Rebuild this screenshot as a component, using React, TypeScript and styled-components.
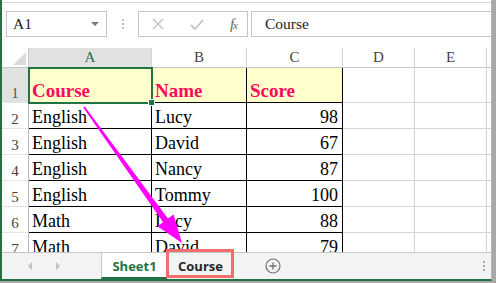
import React from 'react';
import styled, { createGlobalStyle } from 'styled-components';

const GlobalStyle = createGlobalStyle`
  html, body {
    margin: 0;
    padding: 0;
    background: #fff;
  }
  body {
    font-family: "Liberation Serif", "Times New Roman", serif;
  }
`;

const GREEN = '#217346';

const Frame = styled.div`
  position: relative;
  width: 496px;
  height: 283px;
  box-sizing: border-box;
  padding: 0 4px 2px 0;
  background: #a8a8a8;
  overflow: hidden;
`;

const Window = styled.div`
  height: 100%;
  box-sizing: border-box;
  display: flex;
  flex-direction: column;
  background: #fff;
  border-left: 2px solid ${GREEN};
  border-right: 1px solid #b4b4b4;
  border-bottom: 2px solid ${GREEN};
`;

const TopEdge = styled.div`
  height: 3px;
  box-sizing: border-box;
  border-bottom: 1px solid #d6d6d6;
  flex: none;
`;

// formula bar
const FormulaBar = styled.div`
  height: 45px;
  flex: none;
  box-sizing: border-box;
  padding: 8px 0 0 4px;
  display: flex;
  align-items: flex-start;
`;

const Box = styled.div`
  height: 26px;
  box-sizing: border-box;
  border: 1px solid #c6c6c6;
  display: flex;
  align-items: center;
  background: #fff;
`;

const NameBox = styled(Box)`
  width: 101px;
  padding: 0 6px;
  justify-content: space-between;
  font-size: 15.5px;
  color: #222;
`;

const DropArrow = styled.span`
  width: 0;
  height: 0;
  border-left: 4px solid transparent;
  border-right: 4px solid transparent;
  border-top: 4px solid #777;
  margin-right: 1px;
`;

const Grip = styled.div`
  width: 31px;
  height: 26px;
  display: flex;
  flex-direction: column;
  align-items: center;
  justify-content: center;
  gap: 2px;
  span {
    width: 2px;
    height: 2px;
    background: #bdbdbd;
  }
`;

const FxBox = styled(Box)`
  width: 110px;
  padding: 0 10px 0 13px;
  justify-content: space-between;
`;

const FxLabel = styled.span`
  font-style: italic;
  font-size: 15px;
  color: #666;
  letter-spacing: -1px;
  small {
    font-size: 11px;
  }
`;

const FormulaInput = styled(Box)`
  flex: 1;
  margin-left: 3px;
  border-right: none;
  padding-left: 13px;
  font-size: 15.5px;
  color: #222;
`;

// sheet grid
const Sheet = styled.div`
  flex: 1;
  position: relative;
  overflow: hidden;
  display: grid;
  grid-template-columns: 27px 123px 95px 96px 72px 72px 1fr;
  grid-template-rows: 20px 35px repeat(6, 26px);
`;

const Corner = styled.div`
  position: relative;
  box-sizing: border-box;
  border-right: 1px solid #c6c6c6;
  border-bottom: 1px solid #c6c6c6;
  background: #fff;
  &::after {
    content: '';
    position: absolute;
    right: 2px;
    bottom: 2px;
    width: 13px;
    height: 13px;
    background: #dadada;
    clip-path: polygon(100% 0, 100% 100%, 0 100%);
  }
`;

const ColHeader = styled.div<{ $selected?: boolean }>`
  box-sizing: border-box;
  border-right: 1px solid #d4d4d4;
  border-bottom: 1px solid ${(p) => (p.$selected ? '#9fb9a9' : '#c6c6c6')};
  background: ${(p) => (p.$selected ? '#e1e1e1' : '#fff')};
  color: ${(p) => (p.$selected ? GREEN : '#444')};
  font-size: 15px;
  display: flex;
  align-items: center;
  justify-content: center;
`;

const RowHeader = styled.div<{ $selected?: boolean }>`
  box-sizing: border-box;
  border-right: 1px solid #b8b8b8;
  border-bottom: 1px solid #e4e4e4;
  background: ${(p) => (p.$selected ? '#e1e1e1' : '#fff')};
  color: ${(p) => (p.$selected ? GREEN : '#444')};
  font-size: 15px;
  line-height: 18px;
  display: flex;
  align-items: flex-end;
  justify-content: center;
`;

const Cell = styled.div<{ $table?: boolean; $fill?: boolean; $head?: boolean; $num?: boolean }>`
  box-sizing: border-box;
  border-right: 1px solid ${(p) => (p.$table ? '#000' : '#d4d4d4')};
  border-bottom: 1px solid ${(p) => (p.$table ? '#000' : '#d4d4d4')};
  background: ${(p) => (p.$fill ? '#ffffcc' : '#fff')};
  display: flex;
  align-items: flex-end;
  justify-content: ${(p) => (p.$num ? 'flex-end' : 'flex-start')};
  padding: 0 4px 0 3px;
  font-size: ${(p) => (p.$head ? '19px' : '18px')};
  font-weight: ${(p) => (p.$head ? 700 : 400)};
  color: ${(p) => (p.$head ? '#ff0a5c' : '#000')};
  line-height: 22px;
  white-space: nowrap;
  overflow: hidden;
`;

const Selection = styled.div`
  position: absolute;
  left: 26px;
  top: 19px;
  width: 125px;
  height: 37px;
  box-sizing: border-box;
  border: 2px solid ${GREEN};
  pointer-events: none;
  &::after {
    content: '';
    position: absolute;
    right: -4px;
    bottom: -4px;
    width: 5px;
    height: 5px;
    background: ${GREEN};
    border: 1px solid #fff;
  }
`;

// tab bar
const TabBar = styled.div`
  height: 27px;
  flex: none;
  box-sizing: border-box;
  border-top: 1px solid #c6c6c6;
  background: #f3f3f3;
  display: flex;
  align-items: stretch;
`;

const Nav = styled.div`
  width: 99px;
  display: flex;
  align-items: center;
  padding-left: 26px;
  gap: 24px;
  box-sizing: border-box;
`;

const NavArrow = styled.span<{ $dir: 'left' | 'right' }>`
  width: 0;
  height: 0;
  border-top: 4px solid transparent;
  border-bottom: 4px solid transparent;
  ${(p) =>
    p.$dir === 'left' ? 'border-right: 4px solid #c2c2c2;' : 'border-left: 4px solid #c2c2c2;'}
`;

const Tab = styled.div<{ $active?: boolean }>`
  position: relative;
  width: ${(p) => (p.$active ? '66px' : '67px')};
  box-sizing: border-box;
  border-left: ${(p) => (p.$active ? '1px solid #c6c6c6' : 'none')};
  border-bottom: 2px solid ${(p) => (p.$active ? GREEN : 'transparent')};
  background: ${(p) => (p.$active ? '#fff' : 'transparent')};
  color: ${(p) => (p.$active ? GREEN : '#262626')};
  font-family: "Open Sans", "Noto Sans", sans-serif;
  font-weight: 700;
  font-size: 13px;
  display: flex;
  align-items: center;
  justify-content: center;
  padding-top: 1px;
`;

const Highlight = styled.span`
  position: absolute;
  left: -1px;
  right: 0;
  top: -4px;
  bottom: -1px;
  border: 3px solid #f26d6d;
  pointer-events: none;
`;

const AddSheet = styled.div`
  margin-left: 31px;
  display: flex;
  align-items: center;
`;

const TabSpacer = styled.div`
  flex: 1;
`;

const MoreDots = styled.div`
  width: 2px;
  margin-right: 6px;
  display: flex;
  flex-direction: column;
  justify-content: center;
  gap: 2px;
  span {
    width: 2px;
    height: 2px;
    background: #a6a6a6;
  }
`;

const Overlay = styled.svg`
  position: absolute;
  left: 0;
  top: 0;
  pointer-events: none;
`;

const columns = ['A', 'B', 'C', 'D', 'E', ''];

const rows: [string, string, string][] = [
  ['Course', 'Name', 'Score'],
  ['English', 'Lucy', '98'],
  ['English', 'David', '67'],
  ['English', 'Nancy', '87'],
  ['English', 'Tommy', '100'],
  ['Math', 'Lucy', '88'],
  ['Math', 'David', '79'],
];

const App: React.FC = () => {
  return (
    <Frame>
      <GlobalStyle />
      <Window>
        <TopEdge />
        <FormulaBar>
          <NameBox>
            A1
            <DropArrow />
          </NameBox>
          <Grip>
            <span />
            <span />
            <span />
          </Grip>
          <FxBox>
            <svg width="12" height="12" viewBox="0 0 12 12">
              <path d="M1 1 L11 11 M11 1 L1 11" stroke="#c4c4c4" strokeWidth="1.5" fill="none" />
            </svg>
            <svg width="14" height="11" viewBox="0 0 14 11">
              <path d="M1 6 L5 10 L13 1" stroke="#c4c4c4" strokeWidth="1.8" fill="none" />
            </svg>
            <FxLabel>
              f<small>x</small>
            </FxLabel>
          </FxBox>
          <FormulaInput>Course</FormulaInput>
        </FormulaBar>

        <Sheet>
          <Corner />
          {columns.map((c, i) => (
            <ColHeader key={i} $selected={c === 'A'}>
              {c}
            </ColHeader>
          ))}
          {rows.map((r, ri) => (
            <React.Fragment key={ri}>
              <RowHeader $selected={ri === 0}>{ri + 1}</RowHeader>
              {r.map((v, ci) => (
                <Cell key={ci} $table $fill={ri === 0} $head={ri === 0} $num={ri > 0 && ci === 2}>
                  {v}
                </Cell>
              ))}
              <Cell />
              <Cell />
              <Cell />
            </React.Fragment>
          ))}
          <Selection />
        </Sheet>

        <TabBar>
          <Nav>
            <NavArrow $dir="left" />
            <NavArrow $dir="right" />
          </Nav>
          <Tab $active>Sheet1</Tab>
          <Tab>
            Course
            <Highlight />
          </Tab>
          <AddSheet>
            <svg width="16" height="16" viewBox="0 0 16 16">
              <circle cx="8" cy="8" r="7" stroke="#707070" strokeWidth="1.2" fill="none" />
              <path d="M8 4.5 V11.5 M4.5 8 H11.5" stroke="#707070" strokeWidth="1.3" />
            </svg>
          </AddSheet>
          <TabSpacer />
          <MoreDots>
            <span />
            <span />
            <span />
          </MoreDots>
        </TabBar>
      </Window>

      <Overlay width="496" height="283" viewBox="0 0 496 283">
        <polygon
          points="84.8,106.4 167.9,218.6 173.6,214.5 182,243 157.4,226.3 163.1,222.2 83.2,107.6"
          fill="#f0f"
        />
      </Overlay>
    </Frame>
  );
};

export default App;
